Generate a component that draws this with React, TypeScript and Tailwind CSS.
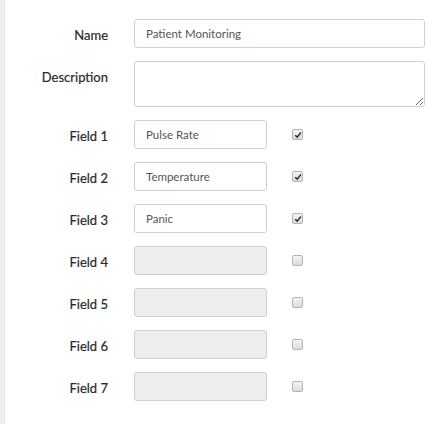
import { useState } from "react";

const FIELDS = [
  { label: "Field 1", value: "Pulse Rate", on: true },
  { label: "Field 2", value: "Temperature", on: true },
  { label: "Field 3", value: "Panic", on: true },
  { label: "Field 4", value: "", on: false },
  { label: "Field 5", value: "", on: false },
  { label: "Field 6", value: "", on: false },
  { label: "Field 7", value: "", on: false },
];

function Check({ on }: { on: boolean }) {
  return (
    <span className="w-[11px] h-[11px] rounded-[2px] border border-[#b3b3b3] bg-gradient-to-b from-[#f4f4f4] to-[#dcdcdc] flex items-center justify-center">
      {on && (
        <svg viewBox="0 0 10 10" className="w-[8px] h-[8px]">
          <path d="M1.5 5.2 L4 7.6 L8.6 1.8" fill="none" stroke="#2b2b2b" strokeWidth="1.8" />
        </svg>
      )}
    </span>
  );
}

function Label({ children }: { children: string }) {
  return (
    <label className="w-[103px] shrink-0 text-right pt-[6px] leading-[20px] text-[13px] font-normal text-[#2a2a2a] [-webkit-text-stroke:0.2px_#2a2a2a]">
      {children}
    </label>
  );
}

export default function App() {
  const [name, setName] = useState("Patient Monitoring");
  const input =
    "h-[29px] rounded-[3px] border border-[#cfcfcf] px-[11px] text-[11.5px] text-[#555] outline-none";
  return (
    <div
      className="flex w-[432px] h-[424px] bg-white"
      style={{ fontFamily: "Lato, 'Open Sans', sans-serif" }}
    >
      <div className="w-[5px] shrink-0 bg-[#eeeeee] border-r border-[#e4e4e4]" />
      <div className="flex flex-col gap-[13px] pt-[19px]">
        <div className="flex items-start">
          <Label>Name</Label>
          <input
            className={`${input} ml-[26px] w-[291px]`}
            value={name}
            onChange={(e) => setName(e.target.value)}
          />
        </div>
        <div className="flex items-start">
          <Label>Description</Label>
          <textarea
            className="ml-[26px] w-[291px] h-[46px] rounded-[3px] border border-[#cfcfcf] px-[11px] py-[5px] text-[11.5px] text-[#555] outline-none"
          />
        </div>
        {FIELDS.map((f) => (
          <div key={f.label} className="flex items-start">
            <Label>{f.label}</Label>
            <input
              className={`${input} ml-[26px] w-[133px] ${f.value ? "bg-white" : "bg-[#eeeeee]"}`}
              defaultValue={f.value}
              disabled={!f.value}
            />
            <div className="h-[29px] ml-[25px] flex items-center">
              <Check on={f.on} />
            </div>
          </div>
        ))}
      </div>
    </div>
  );
}
